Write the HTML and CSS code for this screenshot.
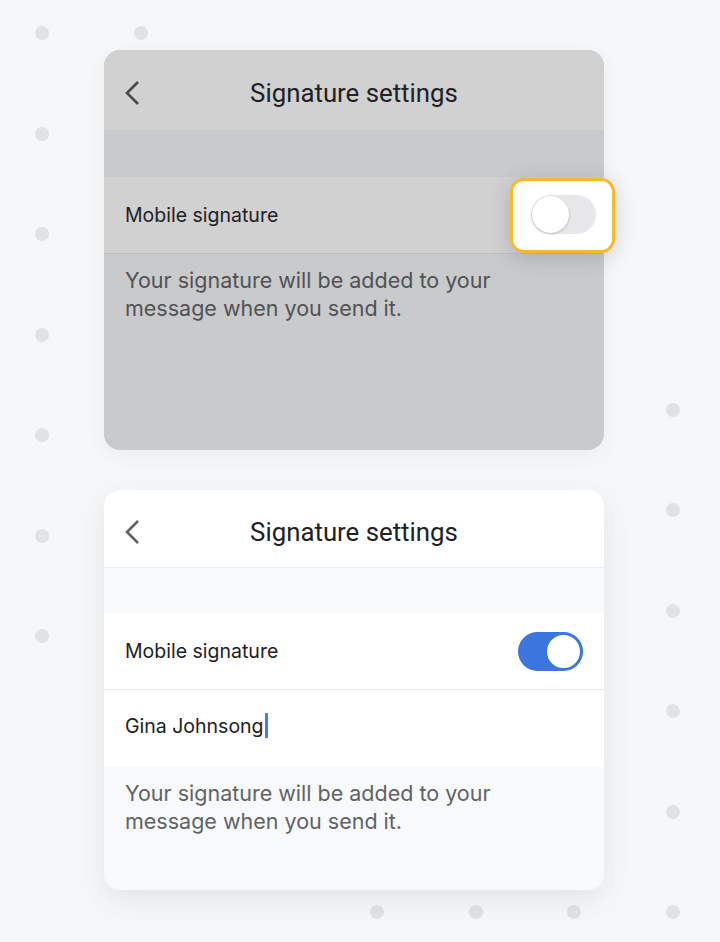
FILE: index.html
```html
<!DOCTYPE html>
<html lang="en">
<head>
  <meta charset="UTF-8" />
  <meta name="viewport" content="width=device-width, initial-scale=1.0" />
  <title>Signature settings</title>
  <link rel="stylesheet" href="styles.css">
</head>
<body>
  <!-- Decorative dot pattern behind the cards -->
  <div class="dots dots-left">
    <span class="dot"></span><span class="dot"></span><span class="dot"></span><span class="dot"></span>
    <span class="dot"></span><span class="dot"></span><span class="dot"></span>
  </div>
  <div class="dots dots-top"><span class="dot"></span></div>
  <div class="dots dots-right">
    <span class="dot"></span><span class="dot"></span><span class="dot"></span>
    <span class="dot"></span><span class="dot"></span><span class="dot"></span>
  </div>
  <div class="dots dots-bottom">
    <span class="dot"></span><span class="dot"></span><span class="dot"></span>
  </div>

  <main class="stack">
    <!-- Step 1: signature switched off, switch called out -->
    <section class="card card-dim">
      <header class="card-header">
        <svg class="back" width="16" height="26" viewBox="0 0 16 26">
          <polyline points="14,2 3,13 14,24" fill="none" stroke="currentColor" stroke-width="2.6" />
        </svg>
        <h1>Signature settings</h1>
      </header>
      <div class="band"></div>
      <div class="row row-divided">
        <span class="label">Mobile signature</span>
        <div class="callout">
          <span class="switch"><span class="knob"></span></span>
        </div>
      </div>
      <p class="hint">Your signature will be added to your message when you send it.</p>
    </section>

    <!-- Step 2: signature switched on and typed in -->
    <section class="card">
      <header class="card-header">
        <svg class="back" width="16" height="26" viewBox="0 0 16 26">
          <polyline points="14,2 3,13 14,24" fill="none" stroke="currentColor" stroke-width="2.6" />
        </svg>
        <h1>Signature settings</h1>
      </header>
      <div class="band"></div>
      <div class="row row-divided">
        <span class="label">Mobile signature</span>
        <span class="switch switch-on"><span class="knob"></span></span>
      </div>
      <div class="row row-input">
        <span class="label">Gina Johnsong<span class="caret"></span></span>
      </div>
      <p class="hint">Your signature will be added to your message when you send it.</p>
    </section>
  </main>
</body>
</html>
```

FILE: styles.css
```css
body {
  margin: 0;
  min-height: 942px;
  background-color: #f6f7f9;
  font-family: Inter, "Liberation Sans", sans-serif;
  position: relative;
  overflow: hidden;
}

/* Background dots */
.dots {
  position: absolute;
  display: flex;
}

.dot {
  width: 14px;
  height: 14px;
  border-radius: 50%;
  background: #e1e2e6;
  flex: none;
}

.dots-left {
  left: 35px;
  top: 26px;
  flex-direction: column;
  gap: 86.5px;
}

.dots-top {
  left: 134px;
  top: 26px;
}

.dots-right {
  left: 666px;
  top: 403px;
  flex-direction: column;
  gap: 86.4px;
}

.dots-bottom {
  left: 370px;
  top: 905px;
  gap: 84.5px;
}

/* Cards */
.stack {
  position: relative;
  display: flex;
  flex-direction: column;
  gap: 40px;
  padding: 50px 0 0 104px;
}

.card {
  width: 500px;
  height: 400px;
  border-radius: 16px;
  background: #f8f9fa;
  box-shadow: 0 10px 30px rgba(60, 64, 67, 0.10);
  display: flex;
  flex-direction: column;
}

.card-header {
  height: 78px;
  padding-top: 6px;
  box-sizing: border-box;
  display: flex;
  align-items: center;
  position: relative;
  background: white;
  border-radius: 16px 16px 0 0;
  border-bottom: 1px solid #ebedef;
  color: #5f6368;
}

.back {
  position: absolute;
  left: 20px;
}

.card-header h1 {
  flex: 1;
  margin: 0;
  text-align: center;
  font-family: Roboto, "Liberation Sans", sans-serif;
  font-size: 25.8px;
  font-weight: 400;
  color: #202124;
}

.band {
  height: 45px;
}

.row {
  height: 77px;
  box-sizing: border-box;
  padding: 0 21px;
  display: flex;
  align-items: center;
  justify-content: space-between;
  background: white;
}

.row-divided {
  border-bottom: 1px solid #e8eaed;
}

.row-input {
  padding-bottom: 6px;
}

.label {
  font-size: 19.5px;
  color: #202124;
  display: flex;
  align-items: center;
}

.caret {
  width: 3px;
  height: 25px;
  margin-left: 1px;
  background: #4a7fe5;
}

.hint {
  margin: 0;
  padding: 12px 21px 0;
  font-size: 21.5px;
  line-height: 28px;
  color: #5f6368;
  max-width: 400px;
}

/* Switches */
.switch {
  width: 65px;
  height: 39px;
  border-radius: 20px;
  background: #e8e8ea;
  display: flex;
  align-items: center;
  padding: 0 1px;
  box-sizing: border-box;
}

.knob {
  width: 37px;
  height: 37px;
  border-radius: 50%;
  background: white;
  box-sizing: border-box;
  box-shadow: 0 1px 3px rgba(0, 0, 0, 0.22);
}

.switch-on {
  background: #3a76dd;
  justify-content: flex-end;
}

.switch-on .knob {
  box-shadow: none;
  border: 2px solid #3a76dd;
}

/* Dimmed first card with the switch called out */
.card-dim {
  background: #c9cacc;
  box-shadow: 0 6px 20px rgba(60, 64, 67, 0.06);
}

.card-dim .card-header {
  height: 81px;
  background: #d1d1d2;
  border-bottom-color: #c8c8c9;
  color: #484848;
}

.card-dim .band {
  height: 46px;
}

.card-dim .row {
  background: #d1d1d2;
  border-bottom-color: #bebfc1;
}

.card-dim .hint {
  color: #505254;
}

.callout {
  margin-right: -32px;
  width: 105px;
  height: 75px;
  box-sizing: border-box;
  border: 3.5px solid #f7b928;
  border-radius: 14px;
  background: white;
  display: flex;
  align-items: center;
  justify-content: center;
  padding: 0 0 1px 2px;
  box-shadow: 0 4px 22px rgba(0, 0, 0, 0.16);
}
```
